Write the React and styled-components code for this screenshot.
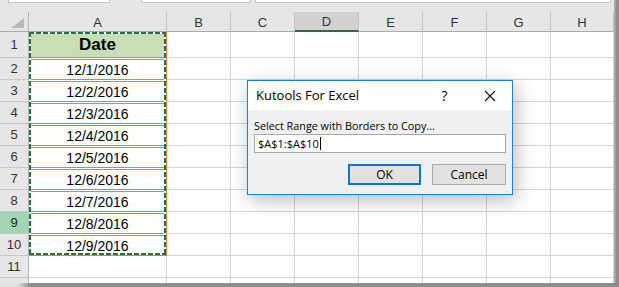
import React from 'react';
import styled, { createGlobalStyle, css } from 'styled-components';

const columns = ['A', 'B', 'C', 'D', 'E', 'F', 'G', 'H'];
const dates = [1, 2, 3, 4, 5, 6, 7, 8, 9].map(d => `12/${d}/2016`);
const rows = [1, 2, 3, 4, 5, 6, 7, 8, 9, 10, 11, 12];

const App = () => {
  const renderCell = (row, col) => {
    if (col === 'A' && row <= 10) {
      return (
        <DataCell key={col} $head={row === 1}>
          {row === 1 ? 'Date' : dates[row - 2]}
        </DataCell>
      );
    }
    return <Cell key={col} />;
  };

  return (
    <>
      <GlobalStyle />
      <Frame>
        <Main>
          <Workbook>
            <FieldStrip>
              <FieldBox $w={102} $ml={8} />
              <FieldBox $w={110} $ml={31} />
              <FieldBox $w={356} $ml={4} />
            </FieldStrip>
            <Sheet>
              <Corner>
                <svg width="13" height="10" viewBox="0 0 13 10">
                  <polygon points="13,0 13,10 0,10" fill="#b9b9b9" />
                </svg>
              </Corner>
              {columns.map(c => (
                <ColHead key={c} $active={c === 'D'}>
                  {c}
                </ColHead>
              ))}
              {rows.map(r => (
                <React.Fragment key={r}>
                  {/* row 12 is only a sliver at the bottom, its number is hidden */}
                  <RowHead $active={r === 9}>{r < 12 ? r : ''}</RowHead>
                  {columns.map(c => renderCell(r, c))}
                </React.Fragment>
              ))}
              <Marquee />
            </Sheet>
          </Workbook>
          <RightEdge />
        </Main>
        <BottomEdge />

        <Dialog>
          <TitleBar>
            <Title>Kutools For Excel</Title>
            <TitleButton>?</TitleButton>
            <TitleButton>
              <svg width="12" height="12" viewBox="0 0 12 12">
                <path d="M1 1 L11 11 M11 1 L1 11" stroke="#111" strokeWidth="1.1" />
              </svg>
            </TitleButton>
          </TitleBar>
          <DialogBody>
            <Label>Select Range with Borders to Copy...</Label>
            <RangeInput>
              $A$1:$A$10
              <Caret />
            </RangeInput>
            <ButtonRow>
              <DialogButton $primary>OK</DialogButton>
              <DialogButton>Cancel</DialogButton>
            </ButtonRow>
          </DialogBody>
        </Dialog>
      </Frame>
    </>
  );
};

const GlobalStyle = createGlobalStyle`
  html, body {
    margin: 0;
    padding: 0;
    background: #fff;
  }
  body {
    width: 619px;
    height: 287px;
    overflow: hidden;
    font-family: "Liberation Sans", Arial, sans-serif;
  }
  * {
    box-sizing: border-box;
  }
`;

const Frame = styled.div`
  position: relative;
  width: 619px;
  height: 287px;
  display: flex;
  flex-direction: column;
  overflow: hidden;
`;

const Main = styled.div`
  display: flex;
  height: 283px;
`;

const Workbook = styled.div`
  width: 614px;
  display: flex;
  flex-direction: column;
  background: #e6e6e6;
`;

const RightEdge = styled.div`
  width: 5px;
  background: linear-gradient(90deg, #b4b4b4, #8a8a8a 60%, #8f8f8f);
`;

const BottomEdge = styled.div`
  height: 4px;
  background: linear-gradient(90deg, #e2e2e2 0, #e2e2e2 18px, #8c8c8c 30px, #8c8c8c);
`;

const FieldStrip = styled.div`
  display: flex;
  height: 12px;
  flex-shrink: 0;
`;

const FieldBox = styled.div`
  width: ${props => props.$w}px;
  margin-left: ${props => props.$ml}px;
  height: 3px;
  background: #fff;
  border: 1px solid #c6c6c6;
  border-top: none;
`;

const Sheet = styled.div`
  position: relative;
  display: grid;
  grid-template-columns: 29px 138px repeat(6, 64px) 63px;
  grid-template-rows: 20px 26px repeat(11, 22px);
  height: 271px;
  overflow: hidden;
  background: #fff;
  font-size: 14px;
  color: #000;
`;

const headText = css`
  display: flex;
  align-items: center;
  justify-content: center;
  font-size: 13px;
  color: #333;
  background: #e6e6e6;
`;

const Corner = styled.div`
  display: flex;
  align-items: flex-end;
  justify-content: flex-end;
  padding: 0 4px 3px 0;
  background: #e6e6e6;
  border-right: 1px solid #b5b5b5;
  border-bottom: 1px solid #ababab;
`;

const ColHead = styled.div`
  ${headText};
  padding-top: 1px;
  border-right: 1px solid #c3c3c3;
  border-bottom: 1px solid #ababab;

  ${props =>
    props.$active &&
    css`
      background: #d2d2d2;
      border-bottom: 2px solid #217346;
    `}
`;

const RowHead = styled.div`
  ${headText};
  border-right: 1px solid #b5b5b5;
  border-bottom: 1px solid #c8c8c8;
  background: ${props => (props.$active ? '#a0d6b4' : '#e6e6e6')};
  color: ${props => (props.$active ? '#222' : '#333')};
`;

const Cell = styled.div`
  border-right: 1px solid #d4d4d4;
  border-bottom: 1px solid #d4d4d4;
`;

const DataCell = styled.div`
  display: flex;
  align-items: center;
  justify-content: center;
  border-right: 1px solid #ed7d31;
  border-bottom: 1px solid #ed7d31;
  background: ${props => (props.$head ? '#c6e0b4' : '#fff')};
  font-size: ${props => (props.$head ? '17px' : '14px')};
  font-weight: ${props => (props.$head ? 700 : 400)};
  padding-top: ${props => (props.$head ? '1px' : '2px')};

  ${props =>
    !props.$head &&
    css`
      box-shadow: inset 0 1px #fff, inset 0 2px #ed7d31;
    `}
`;

const dash = '#217346 0 5px, #fff 5px 7px';

const Marquee = styled.div`
  position: absolute;
  left: 29px;
  top: 20px;
  width: 137px;
  height: 223px;
  pointer-events: none;
  background:
    repeating-linear-gradient(90deg, ${dash}) top left / 100% 2px no-repeat,
    repeating-linear-gradient(90deg, ${dash}) bottom left / 100% 2px no-repeat,
    repeating-linear-gradient(180deg, ${dash}) top left / 2px 100% no-repeat,
    repeating-linear-gradient(180deg, ${dash}) top right / 2px 100% no-repeat;
`;

const Dialog = styled.div`
  position: absolute;
  left: 247px;
  top: 80px;
  width: 266px;
  height: 115px;
  display: flex;
  flex-direction: column;
  border: 1px solid #1883d7;
  background: #f0f0f0;
  box-shadow: 3px 5px 18px rgba(0, 0, 0, 0.28);
  font-family: "Open Sans", "Noto Sans", sans-serif;
  color: #000;
`;

const TitleBar = styled.div`
  display: flex;
  align-items: center;
  height: 29px;
  flex-shrink: 0;
  background: #fff;
  padding-left: 8px;
`;

const Title = styled.div`
  flex: 1;
  font-size: 13px;
  padding-bottom: 1px;
`;

const TitleButton = styled.div`
  width: 45px;
  height: 29px;
  display: flex;
  align-items: center;
  justify-content: center;
  font-size: 14px;
`;

const DialogBody = styled.div`
  display: flex;
  flex-direction: column;
  padding: 8px 6px 0 6px;
`;

const Label = styled.div`
  font-size: 10.8px;
  line-height: 15px;
`;

const RangeInput = styled.div`
  display: flex;
  align-items: center;
  height: 19px;
  margin-top: 1px;
  padding-left: 3px;
  background: #fff;
  border: 1px solid #a9a9a9;
  font-size: 11px;
`;

const Caret = styled.span`
  width: 1px;
  height: 13px;
  margin-left: 1px;
  background: #000;
`;

const ButtonRow = styled.div`
  display: flex;
  justify-content: flex-end;
  gap: 11px;
  margin-top: 11px;
`;

const DialogButton = styled.div`
  width: ${props => (props.$primary ? '73px' : '74px')};
  height: 21px;
  display: flex;
  align-items: center;
  justify-content: center;
  font-size: 12px;
  background: #e1e1e1;
  border: ${props => (props.$primary ? '2px solid #0078d7' : '1px solid #adadad')};
`;

export default App;
